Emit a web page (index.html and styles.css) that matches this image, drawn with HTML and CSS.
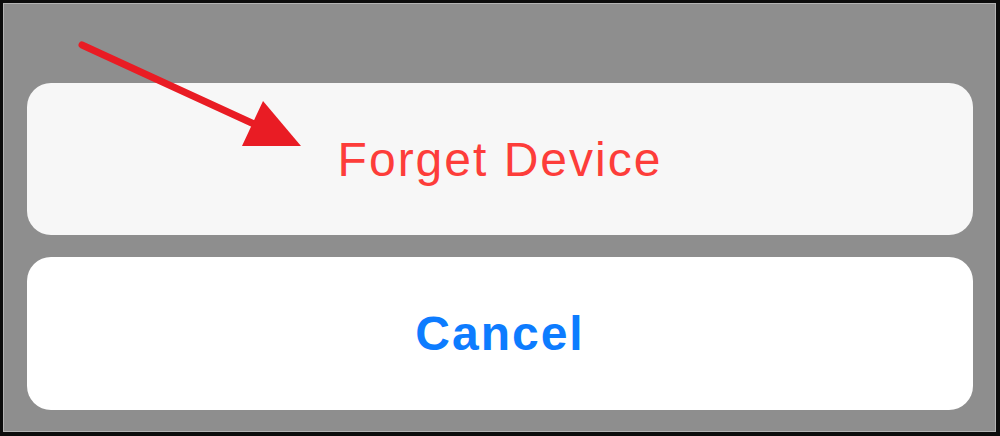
FILE: index.html
```html
<!DOCTYPE html>
<html lang="en">
<head>
    <meta charset="UTF-8">
    <meta name="viewport" content="width=device-width, initial-scale=1.0">
    <title>Forget Device</title>
    <link rel="stylesheet" href="styles.css">
</head>
<body>
    <div class="frame">
        <div class="sheet">
            <div class="action action-destructive">Forget Device</div>
            <div class="action action-cancel">Cancel</div>
        </div>

        <!-- annotation arrow -->
        <svg class="arrow" width="1000" height="436" viewBox="0 0 1000 436">
            <line x1="82" y1="45" x2="254" y2="124" stroke="#e91c24" stroke-width="7" stroke-linecap="round"/>
            <polygon points="242,146 263,101 301,146" fill="#e91c24"/>
        </svg>
    </div>
</body>
</html>
```

FILE: styles.css
```css
* {
    margin: 0;
    padding: 0;
    box-sizing: border-box;
}

html, body {
    width: 1000px;
    height: 436px;
    overflow: hidden;
}

body {
    background: #0c0c0c;
    padding: 3px 4px 4px 3px;
    font-family: 'Liberation Sans', Arial, sans-serif;
}

.frame {
    position: relative;
    height: 100%;
}

.sheet {
    height: 100%;
    background: #8e8e8e;
    border: 1px solid #b4b4b4;
    padding: 79px 22px 21px 23px;
    display: flex;
    flex-direction: column;
    gap: 22px;
}

.action {
    height: 152px;
    border-radius: 24px;
    display: flex;
    align-items: center;
    justify-content: center;
    font-size: 48px;
}

.action-destructive {
    background: #f7f7f7;
    color: #fd3d3a;
    letter-spacing: 2px;
}

.action-cancel {
    height: 153px;
    background: #ffffff;
    color: #0d7cff;
    font-weight: 700;
    letter-spacing: 2px;
}

.arrow {
    position: absolute;
    top: -3px;
    left: -3px;
}
```
